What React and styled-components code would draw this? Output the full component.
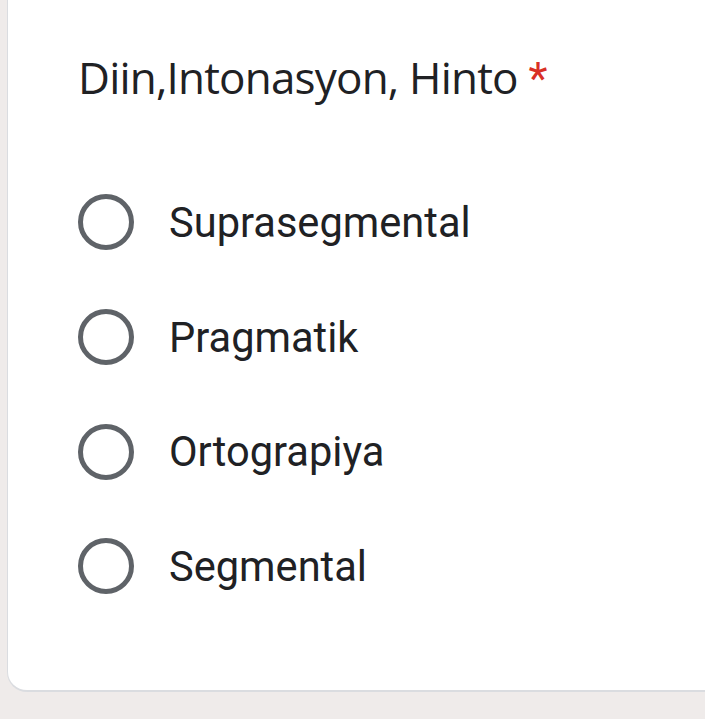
import React from "react"
import styled, { createGlobalStyle } from "styled-components"

const GlobalStyle = createGlobalStyle`
  html, body {
    margin: 0;
    padding: 0;
    background: #efebea;
    overflow: hidden;
  }
`

const options = ["Suprasegmental", "Pragmatik", "Ortograpiya", "Segmental"]

export default function App() {
  return (
    <>
      <GlobalStyle />
      <Page>
        <Card>
          <Title>
            Diin,Intonasyon, Hinto <Required>*</Required>
          </Title>
          <OptionList>
            {options.map((label) => (
              <Option key={label}>
                <Radio />
                <Label>{label}</Label>
              </Option>
            ))}
          </OptionList>
        </Card>
      </Page>
    </>
  )
}

const Page = styled.div`
  width: 705px;
  height: 719px;
  padding-left: 7px;
  box-sizing: border-box;
`

const Card = styled.div`
  width: 720px;
  height: 692px;
  box-sizing: border-box;
  background: #ffffff;
  border-left: 1px solid #dadce0;
  border-bottom: 2px solid #dadce0;
  border-bottom-left-radius: 20px;
  padding: 49px 0 0 70px;
`

const Title = styled.div`
  font-family: "Open Sans", "Noto Sans", sans-serif;
  font-size: 44px;
  line-height: 56px;
  color: #202124;
  letter-spacing: -0.8px;
`

const Required = styled.span`
  color: #d93025;
  font-family: Roboto, sans-serif;
  letter-spacing: 0;
`

const OptionList = styled.div`
  display: flex;
  flex-direction: column;
  margin-top: 58px;
`

const Option = styled.div`
  display: flex;
  align-items: center;
  height: 114.7px;
`

const Radio = styled.div`
  width: 56px;
  height: 56px;
  box-sizing: border-box;
  border: 5px solid #5f6368;
  border-radius: 50%;
  flex-shrink: 0;
`

const Label = styled.span`
  margin-left: 35px;
  font-family: Roboto, "Liberation Sans", sans-serif;
  font-size: 41.6px;
  color: #202124;
`
